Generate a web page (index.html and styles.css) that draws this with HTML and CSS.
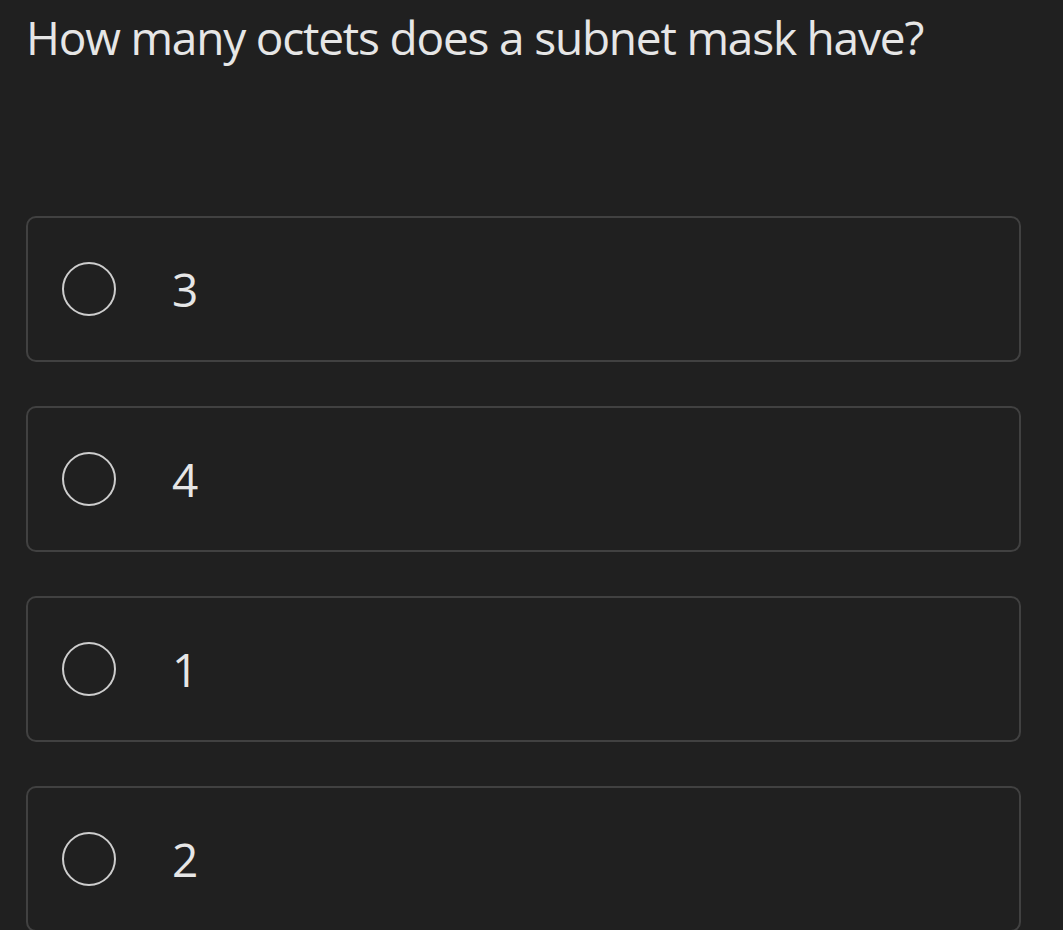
FILE: index.html
```html
<!DOCTYPE html>
<html lang="en">
<head>
    <meta charset="UTF-8">
    <meta name="viewport" content="width=device-width, initial-scale=1.0">
    <title>Quiz Question</title>
    <link rel="stylesheet" href="styles.css">
</head>
<body>
    <div class="quiz">
        <h1 class="question">How many octets does a subnet mask have?</h1>

        <div class="options">
            <label class="option">
                <span class="radio"></span>
                <span class="option-text">3</span>
            </label>
            <label class="option">
                <span class="radio"></span>
                <span class="option-text">4</span>
            </label>
            <label class="option">
                <span class="radio"></span>
                <span class="option-text">1</span>
            </label>
            <label class="option">
                <span class="radio"></span>
                <span class="option-text">2</span>
            </label>
        </div>
    </div>
</body>
</html>
```

FILE: styles.css
```css
:root {
    --bg-color: #202020;
    --text-color: #e6e6e6;
    --border-color: #414141;
    --radio-color: #cdcdcd;
}

body {
    font-family: 'Open Sans', 'Noto Sans', sans-serif;
    margin: 0;
    background: var(--bg-color);
    color: var(--text-color);
    height: 930px;
    overflow: hidden;
}

.quiz {
    padding: 9px 42px 0 26px;
}

.question {
    font-size: 46px;
    font-weight: 400;
    line-height: 56px;
    margin: 0 0 151px;
    letter-spacing: -1.2px;
}

.options {
    display: flex;
    flex-direction: column;
    gap: 44px;
}

.option {
    display: flex;
    align-items: center;
    gap: 56px;
    height: 142px;
    padding: 0 34px;
    border: 2px solid var(--border-color);
    border-radius: 10px;
    cursor: pointer;
}

.radio {
    width: 50px;
    height: 50px;
    border: 2px solid var(--radio-color);
    border-radius: 50%;
    flex-shrink: 0;
}

.option-text {
    font-size: 46px;
    line-height: 56px;
}
```
